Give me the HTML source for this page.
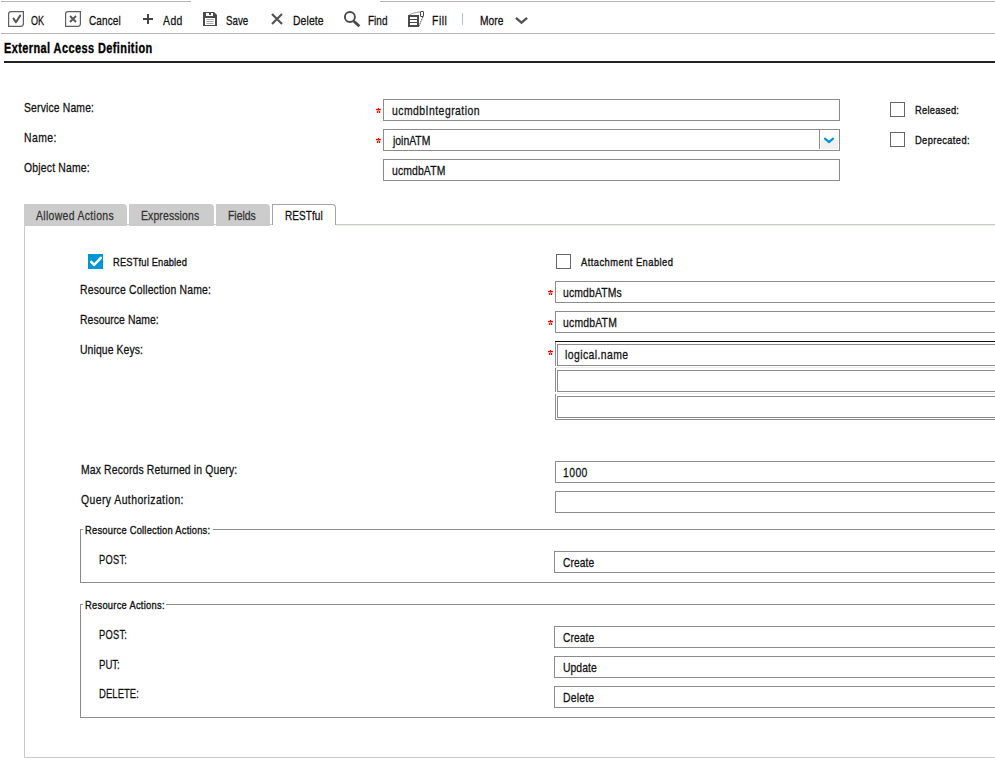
<!DOCTYPE html>
<html><head><meta charset="utf-8"><title>External Access Definition</title>
<style>
html,body{margin:0;padding:0;background:#fff;width:995px;height:761px;overflow:hidden;position:relative;font-family:"Liberation Sans",sans-serif;}
.a{position:absolute;box-sizing:border-box;}
.t{position:absolute;white-space:nowrap;line-height:1;-webkit-text-stroke:0.25px currentColor;transform-origin:0 0;font-family:"Liberation Sans",sans-serif;}
.inp{position:absolute;box-sizing:border-box;border:1px solid #8c8c8c;background:#fff;}
.req{position:absolute;color:#e00;font-size:13px;line-height:1;font-family:"Liberation Sans",sans-serif;}
.cb{position:absolute;box-sizing:border-box;border:1px solid #666;background:#fff;}
.tab{position:absolute;box-sizing:border-box;background:#cccccc;border-top-right-radius:4px;}
svg{position:absolute;overflow:visible;}
</style></head><body>
<svg width="0" height="0" style="position:absolute"><defs><g id="ast" fill="#ff0000">
<rect x="0" y="0.9" width="4.9" height="1.35"/><rect x="1.85" y="0" width="1.3" height="2.6"/>
<rect x="0.9" y="3.05" width="1.3" height="2.05" rx="0.35"/><rect x="2.85" y="3.05" width="1.3" height="2.05" rx="0.35"/>
</g></defs></svg>
<!-- toolbar lines -->
<div class="a" style="left:1px;top:1px;width:190px;height:1px;background:#b4b4b4"></div>
<div class="a" style="left:380px;top:1px;width:615px;height:1px;background:#b4b4b4"></div>
<div class="a" style="left:1px;top:33px;width:994px;height:1px;background:#b4b4b4"></div>
<!-- OK icon -->
<svg style="left:0;top:0" width="995" height="34">
 <g fill="none" stroke="#5f5f5f" stroke-width="1.2">
  <path d="M8.6 14.1 A2.5 2.5 0 0 1 11.1 11.6 H23.4 V23.8 A2.5 2.5 0 0 1 20.9 26.3 H8.6 Z"/>
  <path d="M65.6 14.1 A2.5 2.5 0 0 1 68.1 11.6 H80.4 V23.8 A2.5 2.5 0 0 1 77.9 26.3 H65.6 Z"/>
 </g>
 <path d="M13.6 18.6 L15.9 22.3 L20.2 15.6" fill="none" stroke="#555" stroke-width="2" stroke-linecap="round" stroke-linejoin="round"/>
 <path d="M70 16 L76 22 M76 16 L70 22" fill="none" stroke="#5a5a5a" stroke-width="2"/>
 <!-- plus -->
 <rect x="143" y="18" width="10" height="2" fill="#444"/>
 <rect x="147" y="14" width="2" height="10" fill="#444"/>
 <!-- save -->
 <path d="M203 12 H214 L217 15 V26 H203 Z" fill="#4a4a4a"/>
 <rect x="206" y="13" width="7" height="3" fill="#fff"/>
 <rect x="209" y="13" width="2" height="2" fill="#4a4a4a"/>
 <rect x="205" y="18" width="10" height="7" fill="#fff"/>
 <path d="M206.5 19.6 H213.5 M206.5 21.5 H213.5 M206.5 23.4 H213.5" stroke="#999" stroke-width="0.9"/>
 <!-- delete x -->
 <path d="M272 14 L282 24 M282 14 L272 24" stroke="#555" stroke-width="2.2"/>
 <!-- find -->
 <circle cx="349.9" cy="17" r="5" fill="none" stroke="#4a4a4a" stroke-width="1.9"/>
 <path d="M353.6 21 L359.4 26.3" stroke="#4a4a4a" stroke-width="2.8"/>
 <!-- fill -->
 <rect x="408" y="15" width="11" height="12" fill="#4a4a4a"/>
 <rect x="410" y="17" width="7" height="2" fill="#fff"/>
 <rect x="410" y="20" width="7" height="2" fill="#fff"/>
 <rect x="410" y="23" width="7" height="2" fill="#fff"/>
 <rect x="420.5" y="11.5" width="3" height="5" rx="0.4" fill="none" stroke="#4a4a4a" stroke-width="1"/>
 <path d="M409 15 Q414 12 420 12" fill="none" stroke="#888" stroke-width="0.8"/>
 <path d="M422.8 17 L418.8 26.5" fill="none" stroke="#555" stroke-width="1" stroke-dasharray="1.5 0.7"/>
 <!-- separator -->
 <rect x="462" y="13" width="1" height="12" fill="#a8c8f0"/>
 <!-- chevron -->
 <path d="M515.9 17.9 L521.5 22.7 L527.1 17.9" fill="none" stroke="#555" stroke-width="2.4"/>
</svg>
<!-- title underline -->
<div class="a" style="left:4px;top:61px;width:991px;height:2px;background:#222"></div>

<!-- header form -->
<svg style="left:376px;top:107.9px" width="6" height="6"><use href="#ast"/></svg>
<div class="inp" style="left:383px;top:99px;width:457px;height:22px"></div>
<svg style="left:376px;top:137.9px" width="6" height="6"><use href="#ast"/></svg>
<div class="inp" style="left:383px;top:129px;width:457px;height:22px"></div>
<div class="a" style="left:819px;top:129px;width:1px;height:20px;background:#8c8c8c"></div>
<div class="a" style="left:821px;top:140px;width:17px;height:9px;background:#f1f1f1"></div>
<svg style="left:0;top:0" width="995" height="200"><path d="M825 138.7 L829 142.1 L833 138.7" fill="none" stroke="#0096d6" stroke-width="2.2" stroke-linecap="round" stroke-linejoin="round"/></svg>
<div class="inp" style="left:383px;top:159px;width:457px;height:22px"></div>
<div class="cb" style="left:890px;top:102px;width:15px;height:15px"></div>
<div class="cb" style="left:890px;top:132px;width:15px;height:15px"></div>

<!-- tabs -->
<div class="tab" style="left:24px;top:204px;width:103px;height:22px"></div>
<div class="tab" style="left:129px;top:204px;width:85px;height:22px"></div>
<div class="tab" style="left:216px;top:204px;width:54px;height:22px"></div>
<div class="a" style="left:272px;top:204px;width:64px;height:21px;border:1px solid #a4a4a8;border-bottom:none;border-top-right-radius:4px;background:#fff"></div>
<div class="a" style="left:336px;top:224px;width:659px;height:1px;background:#c6cec6"></div>
<div class="a" style="left:336px;top:225px;width:659px;height:1px;background:#eef0ee"></div>
<div class="a" style="left:127px;top:224px;width:2px;height:1px;background:#c6cec6"></div>
<div class="a" style="left:214px;top:224px;width:2px;height:1px;background:#c6cec6"></div>
<div class="a" style="left:270px;top:224px;width:2px;height:1px;background:#c6cec6"></div>
<!-- panel -->
<div class="a" style="left:24px;top:226px;width:1px;height:532px;background:#cccccc"></div>
<div class="a" style="left:24px;top:757px;width:971px;height:1px;background:#cccccc"></div>

<!-- restful content -->
<div class="a" style="left:88px;top:254px;width:15px;height:15px;background:#0096d6"></div>
<svg style="left:0;top:0" width="995" height="300"><path d="M91.2 261.8 L94.1 264.8 L100.8 257.8" fill="none" stroke="#fff" stroke-width="2.5" stroke-linecap="round" stroke-linejoin="round"/></svg>
<div class="cb" style="left:556px;top:254px;width:15px;height:15px"></div>

<svg style="left:548px;top:289.9px" width="6" height="6"><use href="#ast"/></svg>
<div class="inp" style="left:555px;top:281px;width:450px;height:22px"></div>
<svg style="left:548px;top:319.9px" width="6" height="6"><use href="#ast"/></svg>
<div class="inp" style="left:555px;top:311px;width:450px;height:22px"></div>
<svg style="left:548px;top:349.9px" width="6" height="6"><use href="#ast"/></svg>
<!-- unique keys grid -->
<div class="a" style="left:555px;top:341px;width:440px;height:1px;background:#111"></div>
<div class="a" style="left:555px;top:342px;width:1px;height:24px;background:#8c8c8c"></div>
<div class="a" style="left:555px;top:368px;width:1px;height:24px;background:#8c8c8c"></div>
<div class="a" style="left:555px;top:394px;width:1px;height:25px;background:#8c8c8c"></div>
<div class="a" style="left:555px;top:367px;width:440px;height:1px;background:#ececec"></div>
<div class="a" style="left:555px;top:393px;width:440px;height:1px;background:#ececec"></div>
<div class="a" style="left:555px;top:419px;width:440px;height:1px;background:#8c8c8c"></div>
<div class="inp" style="left:557px;top:344px;width:450px;height:22px"></div>
<div class="inp" style="left:557px;top:370px;width:450px;height:22px"></div>
<div class="inp" style="left:557px;top:396px;width:450px;height:22px"></div>

<div class="inp" style="left:555px;top:461px;width:450px;height:22px"></div>
<div class="inp" style="left:555px;top:491px;width:450px;height:22px"></div>

<!-- fieldset 1 -->
<div class="a" style="left:80px;top:529px;width:1px;height:54px;background:#8c8c8c"></div>
<div class="a" style="left:80px;top:529px;width:3px;height:1px;background:#8c8c8c"></div>
<div class="a" style="left:213px;top:529px;width:782px;height:1px;background:#8c8c8c"></div>
<div class="a" style="left:80px;top:582px;width:915px;height:1px;background:#8c8c8c"></div>
<div class="inp" style="left:554px;top:551px;width:450px;height:22px"></div>
<!-- fieldset 2 -->
<div class="a" style="left:80px;top:604px;width:1px;height:114px;background:#8c8c8c"></div>
<div class="a" style="left:80px;top:604px;width:3px;height:1px;background:#8c8c8c"></div>
<div class="a" style="left:166px;top:604px;width:829px;height:1px;background:#8c8c8c"></div>
<div class="a" style="left:80px;top:717px;width:915px;height:1px;background:#8c8c8c"></div>
<div class="inp" style="left:554px;top:626px;width:450px;height:22px"></div>
<div class="inp" style="left:554px;top:656px;width:450px;height:22px"></div>
<div class="inp" style="left:554px;top:686px;width:450px;height:22px"></div>

<div class="t" style="left:31.00px;top:14px;font-size:13px;font-weight:400;color:#111;-webkit-text-stroke:0.28px #111;letter-spacing:0.000px;transform:scaleX(0.6943)">OK</div>
<div class="t" style="left:88.80px;top:14px;font-size:13px;font-weight:400;color:#111;-webkit-text-stroke:0.28px #111;letter-spacing:0.140px;transform:scaleX(0.7704)">Cancel</div>
<div class="t" style="left:163.10px;top:14px;font-size:13px;font-weight:400;color:#111;-webkit-text-stroke:0.28px #111;letter-spacing:0.562px;transform:scaleX(0.8000)">Add</div>
<div class="t" style="left:225.60px;top:14px;font-size:13px;font-weight:400;color:#111;-webkit-text-stroke:0.28px #111;letter-spacing:0.000px;transform:scaleX(0.7476)">Save</div>
<div class="t" style="left:292.90px;top:14px;font-size:13px;font-weight:400;color:#111;-webkit-text-stroke:0.28px #111;letter-spacing:0.135px;transform:scaleX(0.8000)">Delete</div>
<div class="t" style="left:367.60px;top:14px;font-size:13px;font-weight:400;color:#111;-webkit-text-stroke:0.28px #111;letter-spacing:0.039px;transform:scaleX(0.7645)">Find</div>
<div class="t" style="left:431.50px;top:14px;font-size:13px;font-weight:400;color:#111;-webkit-text-stroke:0.28px #111;letter-spacing:0.675px;transform:scaleX(0.8000)">Fill</div>
<div class="t" style="left:480.40px;top:14px;font-size:13px;font-weight:400;color:#111;-webkit-text-stroke:0.28px #111;letter-spacing:0.076px;transform:scaleX(0.7867)">More</div>
<div class="t" style="left:4.00px;top:41px;font-size:14px;font-weight:700;color:#000;-webkit-text-stroke:0.35px #000;letter-spacing:0.554px;transform:scaleX(0.7800)">External Access Definition</div>
<div class="t" style="left:24.00px;top:101px;font-size:13px;font-weight:400;color:#111;-webkit-text-stroke:0.28px #111;letter-spacing:0.188px;transform:scaleX(0.8000)">Service Name:</div>
<div class="t" style="left:24.00px;top:131px;font-size:13px;font-weight:400;color:#111;-webkit-text-stroke:0.28px #111;letter-spacing:0.562px;transform:scaleX(0.8000)">Name:</div>
<div class="t" style="left:24.00px;top:161px;font-size:13px;font-weight:400;color:#111;-webkit-text-stroke:0.28px #111;letter-spacing:0.245px;transform:scaleX(0.8000)">Object Name:</div>
<div class="t" style="left:391.50px;top:104px;font-size:13px;font-weight:400;color:#111;-webkit-text-stroke:0.28px #111;letter-spacing:0.600px;transform:scaleX(0.8000)">ucmdbIntegration</div>
<div class="t" style="left:392.50px;top:134px;font-size:13px;font-weight:400;color:#111;-webkit-text-stroke:0.28px #111;letter-spacing:0.000px;transform:scaleX(0.8000)">joinATM</div>
<div class="t" style="left:391.50px;top:164px;font-size:13px;font-weight:400;color:#111;-webkit-text-stroke:0.28px #111;letter-spacing:0.161px;transform:scaleX(0.8000)">ucmdbATM</div>
<div class="t" style="left:915.00px;top:104px;font-size:11.7px;font-weight:400;color:#111;-webkit-text-stroke:0.35px #111;letter-spacing:0.281px;transform:scaleX(0.8000)">Released:</div>
<div class="t" style="left:915.00px;top:134px;font-size:11.7px;font-weight:400;color:#111;-webkit-text-stroke:0.35px #111;letter-spacing:0.450px;transform:scaleX(0.8000)">Deprecated:</div>
<div class="t" style="left:36.30px;top:209px;font-size:13px;font-weight:400;color:#333;-webkit-text-stroke:0.28px #333;letter-spacing:0.434px;transform:scaleX(0.8000)">Allowed Actions</div>
<div class="t" style="left:141.20px;top:209px;font-size:13px;font-weight:400;color:#333;-webkit-text-stroke:0.28px #333;letter-spacing:0.180px;transform:scaleX(0.8000)">Expressions</div>
<div class="t" style="left:228.20px;top:209px;font-size:13px;font-weight:400;color:#333;-webkit-text-stroke:0.28px #333;letter-spacing:0.000px;transform:scaleX(0.8000)">Fields</div>
<div class="t" style="left:285.30px;top:209px;font-size:13px;font-weight:400;color:#111;-webkit-text-stroke:0.28px #111;letter-spacing:0.097px;transform:scaleX(0.7692)">RESTful</div>
<div class="t" style="left:113.20px;top:256px;font-size:11.7px;font-weight:400;color:#111;-webkit-text-stroke:0.35px #111;letter-spacing:0.193px;transform:scaleX(0.8000)">RESTful Enabled</div>
<div class="t" style="left:581.00px;top:256px;font-size:11.7px;font-weight:400;color:#111;-webkit-text-stroke:0.35px #111;letter-spacing:0.569px;transform:scaleX(0.8000)">Attachment Enabled</div>
<div class="t" style="left:80.20px;top:283px;font-size:13px;font-weight:400;color:#111;-webkit-text-stroke:0.28px #111;letter-spacing:0.225px;transform:scaleX(0.8000)">Resource Collection Name:</div>
<div class="t" style="left:80.20px;top:313px;font-size:13px;font-weight:400;color:#111;-webkit-text-stroke:0.28px #111;letter-spacing:0.069px;transform:scaleX(0.8000)">Resource Name:</div>
<div class="t" style="left:80.20px;top:343px;font-size:13px;font-weight:400;color:#111;-webkit-text-stroke:0.28px #111;letter-spacing:0.123px;transform:scaleX(0.8000)">Unique Keys:</div>
<div class="t" style="left:563.10px;top:286px;font-size:13px;font-weight:400;color:#111;-webkit-text-stroke:0.28px #111;letter-spacing:0.169px;transform:scaleX(0.8000)">ucmdbATMs</div>
<div class="t" style="left:563.10px;top:316px;font-size:13px;font-weight:400;color:#111;-webkit-text-stroke:0.28px #111;letter-spacing:0.257px;transform:scaleX(0.8000)">ucmdbATM</div>
<div class="t" style="left:565.30px;top:348px;font-size:13px;font-weight:400;color:#111;-webkit-text-stroke:0.28px #111;letter-spacing:0.532px;transform:scaleX(0.8000)">logical.name</div>
<div class="t" style="left:80.80px;top:463px;font-size:13px;font-weight:400;color:#111;-webkit-text-stroke:0.28px #111;letter-spacing:0.178px;transform:scaleX(0.8000)">Max Records Returned in Query:</div>
<div class="t" style="left:80.80px;top:493px;font-size:13px;font-weight:400;color:#111;-webkit-text-stroke:0.28px #111;letter-spacing:0.545px;transform:scaleX(0.8000)">Query Authorization:</div>
<div class="t" style="left:563.20px;top:466px;font-size:13px;font-weight:400;color:#111;-webkit-text-stroke:0.28px #111;letter-spacing:0.525px;transform:scaleX(0.8000)">1000</div>
<div class="t" style="left:85.00px;top:524px;font-size:11.7px;font-weight:400;color:#111;-webkit-text-stroke:0.35px #111;letter-spacing:0.283px;transform:scaleX(0.8000)">Resource Collection Actions:</div>
<div class="t" style="left:99.30px;top:553px;font-size:13px;font-weight:400;color:#111;-webkit-text-stroke:0.28px #111;letter-spacing:0.378px;transform:scaleX(0.7150)">POST:</div>
<div class="t" style="left:562.60px;top:556px;font-size:13px;font-weight:400;color:#111;-webkit-text-stroke:0.28px #111;letter-spacing:0.138px;transform:scaleX(0.7850)">Create</div>
<div class="t" style="left:84.80px;top:599px;font-size:11.7px;font-weight:400;color:#111;-webkit-text-stroke:0.35px #111;letter-spacing:0.323px;transform:scaleX(0.8000)">Resource Actions:</div>
<div class="t" style="left:99.30px;top:628px;font-size:13px;font-weight:400;color:#111;-webkit-text-stroke:0.28px #111;letter-spacing:0.378px;transform:scaleX(0.7150)">POST:</div>
<div class="t" style="left:99.30px;top:658px;font-size:13px;font-weight:400;color:#111;-webkit-text-stroke:0.28px #111;letter-spacing:0.000px;transform:scaleX(0.7359)">PUT:</div>
<div class="t" style="left:99.30px;top:687px;font-size:13px;font-weight:400;color:#111;-webkit-text-stroke:0.28px #111;letter-spacing:0.082px;transform:scaleX(0.7294)">DELETE:</div>
<div class="t" style="left:562.60px;top:631px;font-size:13px;font-weight:400;color:#111;-webkit-text-stroke:0.28px #111;letter-spacing:0.138px;transform:scaleX(0.7850)">Create</div>
<div class="t" style="left:562.60px;top:661px;font-size:13px;font-weight:400;color:#111;-webkit-text-stroke:0.28px #111;letter-spacing:0.045px;transform:scaleX(0.8000)">Update</div>
<div class="t" style="left:562.60px;top:691px;font-size:13px;font-weight:400;color:#111;-webkit-text-stroke:0.28px #111;letter-spacing:0.270px;transform:scaleX(0.8000)">Delete</div>
</body></html>
